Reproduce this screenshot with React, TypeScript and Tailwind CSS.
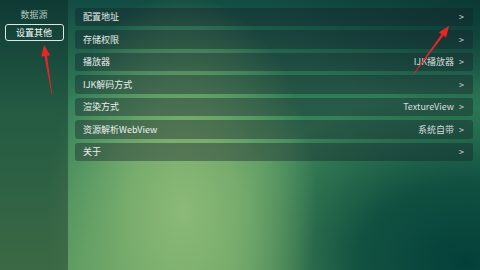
import React from "react";

type Row = { label: string; value?: string };

const rows: Row[] = [
  { label: "配置地址" },
  { label: "存储权限" },
  { label: "播放器", value: "IJK播放器" },
  { label: "IJK解码方式" },
  { label: "渲染方式", value: "TextureView" },
  { label: "资源解析WebView", value: "系统自带" },
  { label: "关于" },
];

function SettingRow({ label, value }: Row) {
  return (
    <div className="flex h-[18.5px] items-center rounded-[3px] bg-[rgba(22,32,42,0.4)] pl-[8px] pr-[9px] text-[9px] leading-none">
      <span className="text-white/90">{label}</span>
      <span className="ml-auto text-[#d6dedb]">{value}</span>
      <span className="ml-[5px] text-[#d6dedb]">&gt;</span>
    </div>
  );
}

// 标注用的红色箭头
function Arrows() {
  return (
    <svg className="pointer-events-none absolute inset-0" width="480" height="270" viewBox="0 0 480 270">
      <polygon
        fill="#ec2428"
        points="44,45 50.19,55.16 46.97,55.67 52.25,94.96 51.75,95.04 44.5,56.07 41.29,56.58"
      />
      <polygon
        fill="#ec2428"
        points="449,26 446.12,37.53 443.5,35.61 413.2,75.15 412.8,74.85 441.48,34.13 438.86,32.21"
      />
    </svg>
  );
}

export default function App() {
  return (
    <div
      className="relative flex h-[270px] w-[480px] overflow-hidden bg-[#2a7453] bg-[radial-gradient(ellipse_28%_80%_at_38%_78%,#8cba77_0%,rgba(128,178,112,0.85)_40%,rgba(100,160,95,0)_100%),radial-gradient(ellipse_50%_65%_at_97%_97%,#03403a_0%,rgba(6,70,60,0.85)_45%,rgba(10,80,65,0)_100%),radial-gradient(ellipse_45%_40%_at_100%_0%,#0b3a35_0%,rgba(11,58,53,0)_100%),linear-gradient(to_bottom,#124c43_0%,#33815a_40%,#5a985e_100%)]"
      style={{ fontFamily: '"Noto Sans CJK SC", "Noto Sans", sans-serif' }}
    >
      <aside className="flex w-[68px] shrink-0 flex-col items-center bg-[rgba(10,30,30,0.38)] pt-[9px]">
        <div className="text-[9px] leading-[12px] text-[#b4c4bf]">数据源</div>
        <div className="mt-[3px] flex h-[16.5px] w-[59px] items-center justify-center rounded-[3px] border-[1.5px] border-[#dfe6e3] text-[9px] leading-none text-white">
          设置其他
        </div>
      </aside>
      <main className="flex flex-1 flex-col gap-[4px] pl-[7px] pr-[7px] pt-[7.5px]">
        {rows.map((r) => (
          <SettingRow key={r.label} {...r} />
        ))}
      </main>
      <Arrows />
    </div>
  );
}
